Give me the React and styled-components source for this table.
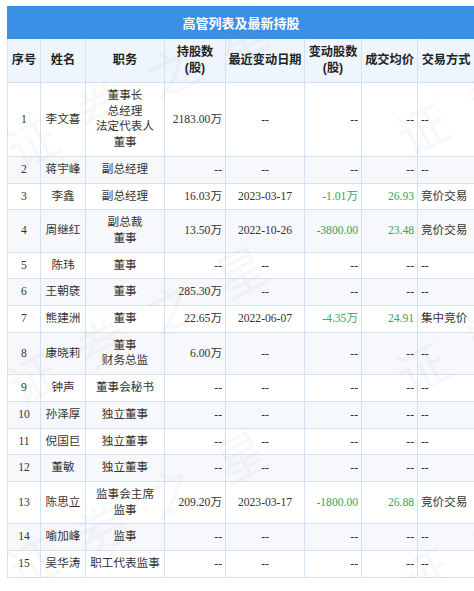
import React from "react";
import styled, {createGlobalStyle} from "styled-components";

const GlobalStyle = createGlobalStyle`
  html, body {
    margin: 0;
    padding: 0;
    background: #fff;
  }
  body {
    font-family: "Liberation Serif", "Noto Sans CJK SC", serif;
    color: #333;
  }
`;

const Page = styled.div`
  padding: 6px 0 0 7px;
  width: 474px;
  box-sizing: border-box;
  overflow: hidden;
`;

const Wrap = styled.div`
  position: relative;
  width: 467px;
`;

const Table = styled.table`
  width: 467px;
  border-collapse: collapse;
  table-layout: fixed;
  font-size: 11.6px;
`;

const TitleCell = styled.th`
  background: #3b8fe5;
  color: #fff;
  font-family: "Noto Sans CJK SC", sans-serif;
  font-size: 13px;
  font-weight: bold;
  height: 31px;
  padding: 0;
  text-align: center;
  border: 1px solid #3b8fe5;
`;

const HeadCell = styled.th`
  background: #eef5fd;
  color: #222;
  font-family: "Liberation Sans", "Noto Sans CJK SC", sans-serif;
  font-size: 12.2px;
  font-weight: bold;
  line-height: 15.5px;
  padding: 6px 0;
  text-align: center;
  white-space: nowrap;
  border: 1px solid #d3e2f2;
`;

const Row = styled.tr`
  background: ${p => (p.$shade ? "#f6f8fb" : "#fff")};
`;

const Cell = styled.td`
  border: 1px solid #d3e2f2;
  padding: 5px 3px;
  line-height: 15.7px;
  text-align: ${p => p.$align || "center"};
  color: ${p => (p.$green ? "#35a55a" : "#333")};
  white-space: nowrap;
  vertical-align: middle;
`;

const Line = styled.div``;

const Watermark = styled.div`
  position: absolute;
  inset: 0;
  overflow: hidden;
  pointer-events: none;
`;

const Mark = styled.span`
  position: absolute;
  font-family: "Noto Sans CJK SC", sans-serif;
  font-size: 50px;
  letter-spacing: 28px;
  color: rgba(120, 130, 140, 0.055);
  white-space: nowrap;
  transform: rotate(-27deg);
  transform-origin: left center;
`;

const cols = [33, 45, 79, 61, 79, 57, 56, 57];

const heads = [
    ["序号"],
    ["姓名"],
    ["职务"],
    ["持股数", "(股)"],
    ["最近变动日期"],
    ["变动股数", "(股)"],
    ["成交均价"],
    ["交易方式"],
];

const rows = [
    ["1", "李文喜", ["董事长", "总经理", "法定代表人", "董事"], "2183.00万", "--", "--", "--", "--"],
    ["2", "蒋宇峰", ["副总经理"], "--", "--", "--", "--", "--"],
    ["3", "李鑫", ["副总经理"], "16.03万", "2023-03-17", "-1.01万", "26.93", "竞价交易"],
    ["4", "周继红", ["副总裁", "董事"], "13.50万", "2022-10-26", "-3800.00", "23.48", "竞价交易"],
    ["5", "陈玮", ["董事"], "--", "--", "--", "--", "--"],
    ["6", "王朝褎", ["董事"], "285.30万", "--", "--", "--", "--"],
    ["7", "熊建洲", ["董事"], "22.65万", "2022-06-07", "-4.35万", "24.91", "集中竞价"],
    ["8", "康晓莉", ["董事", "财务总监"], "6.00万", "--", "--", "--", "--"],
    ["9", "钟声", ["董事会秘书"], "--", "--", "--", "--", "--"],
    ["10", "孙泽厚", ["独立董事"], "--", "--", "--", "--", "--"],
    ["11", "倪国巨", ["独立董事"], "--", "--", "--", "--", "--"],
    ["12", "董敏", ["独立董事"], "--", "--", "--", "--", "--"],
    ["13", "陈思立", ["监事会主席", "监事"], "209.20万", "2023-03-17", "-1800.00", "26.88", "竞价交易"],
    ["14", "喻加峰", ["监事"], "--", "--", "--", "--", "--"],
    ["15", "吴华涛", ["职工代表监事"], "--", "--", "--", "--", "--"],
];

const marks = [
    {left: 2, top: 110},
    {left: 392, top: 96},
    {left: 2, top: 345},
    {left: 392, top: 335},
    {left: 2, top: 530},
    {left: 396, top: 540},
];

const App = () => {
    return (
        <>
            <GlobalStyle/>
            <Page>
                <Wrap>
                    <Table>
                        <colgroup>
                            {cols.map((w, i) => <col key={i} style={{width: w}}/>)}
                        </colgroup>
                        <thead>
                        <tr>
                            <TitleCell colSpan={8}>高管列表及最新持股</TitleCell>
                        </tr>
                        <tr>
                            {heads.map((h, i) => (
                                <HeadCell key={i}>
                                    {h.map((t, j) => <Line key={j}>{t}</Line>)}
                                </HeadCell>
                            ))}
                        </tr>
                        </thead>
                        <tbody>
                        {rows.map((r, i) => {
                            const green = r[5] !== "--";
                            return (
                                <Row key={i} $shade={i % 2 === 1}>
                                    <Cell>{r[0]}</Cell>
                                    <Cell>{r[1]}</Cell>
                                    <Cell>
                                        {r[2].map((t, j) => <Line key={j}>{t}</Line>)}
                                    </Cell>
                                    <Cell $align="right">{r[3]}</Cell>
                                    <Cell>{r[4]}</Cell>
                                    <Cell $align="right" $green={green}>{r[5]}</Cell>
                                    <Cell $align="right" $green={green}>{r[6]}</Cell>
                                    <Cell $align="left">{r[7]}</Cell>
                                </Row>
                            );
                        })}
                        </tbody>
                    </Table>
                    <Watermark>
                        {marks.map((m, i) => (
                            <Mark key={i} style={{left: m.left, top: m.top}}>证券之星</Mark>
                        ))}
                    </Watermark>
                </Wrap>
            </Page>
        </>
    );
};

export default App;
